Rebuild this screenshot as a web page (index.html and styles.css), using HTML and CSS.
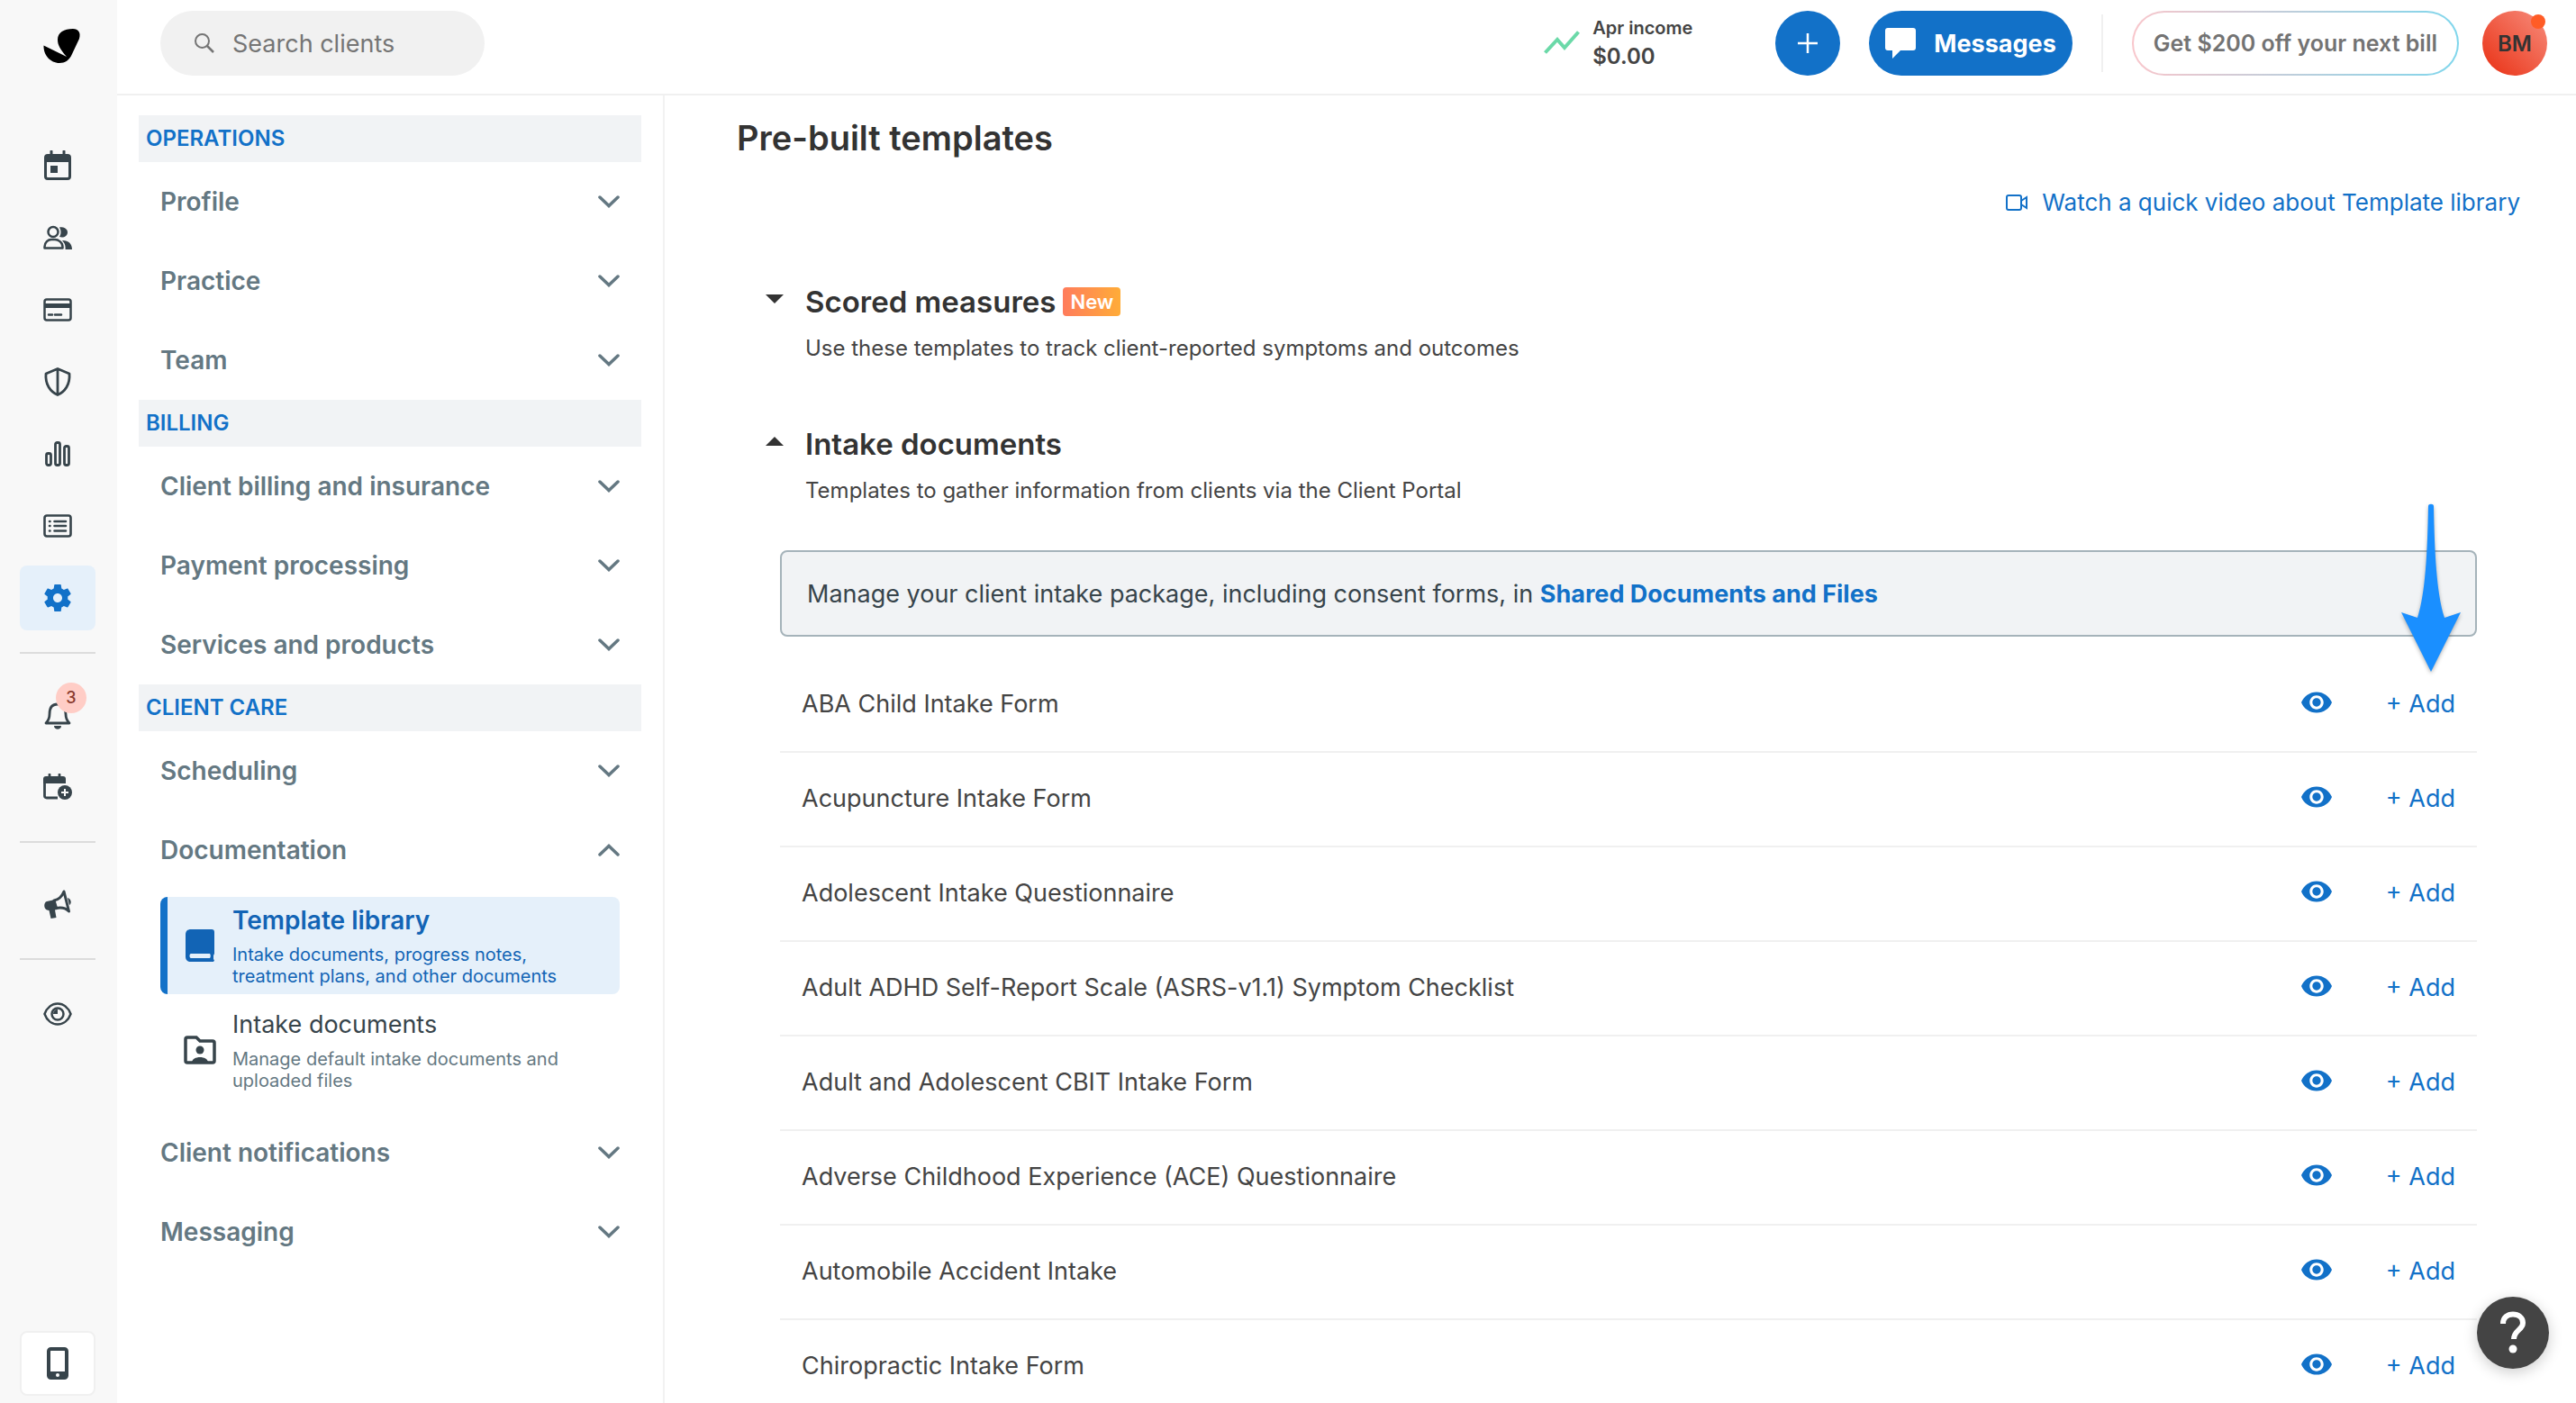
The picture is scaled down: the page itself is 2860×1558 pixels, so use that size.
FILE: index.html
```
<!DOCTYPE html>
<html lang="en">
<head>
  <meta charset="UTF-8" />
  <meta name="viewport" content="width=device-width, initial-scale=1" />
  <title>Template library</title>
  <link rel="stylesheet" href="styles.css">
</head>
<body>
  <svg width="0" height="0" class="sprite" aria-hidden="true">
    <symbol id="i-chevron" viewBox="0 0 24 14"><path d="M2 2l10 9.500L22 2" fill="none" stroke="currentColor" stroke-width="3.500" stroke-linecap="round"/></symbol>
    <symbol id="i-eye" viewBox="1 4.500 22 15"><path fill="currentColor" d="M12 4.500C7 4.500 2.730 7.610 1 12c1.730 4.390 6 7.500 11 7.500s9.270-3.110 11-7.500c-1.730-4.390-6-7.500-11-7.500zM12 17c-2.760 0-5-2.240-5-5s2.240-5 5-5 5 2.240 5 5-2.240 5-5 5zm0-8c-1.660 0-3 1.340-3 3s1.340 3 3 3 3-1.340 3-3-1.340-3-3-3z"/></symbol>
  </svg>

  <nav class="rail" aria-label="Main">
    <a href="#" class="logo" aria-label="Home">
      <svg viewBox="0 0 42 40" width="42" height="40"><path d="M26 31C19 23 16 18 16 12C16 4 23 0 33 0C39 0 42 4 40 11L32 28C29 35 24 38 18 38C8 38 0 29 .5 18.500Z"/></svg>
    </a>
    <a href="#" class="rail-item" aria-label="Calendar">
      <svg viewBox="0 0 32 34" width="32" height="34"><path d="M9 1v5M23 1v5" stroke="currentColor" stroke-width="3" stroke-linecap="round"/><rect x="2.500" y="5.500" width="27" height="26" rx="2.500" fill="none" stroke="currentColor" stroke-width="3"/><path d="M2 5h28v8H2zM8 17h8v8H8z" fill="currentColor"/></svg>
    </a>
    <a href="#" class="rail-item" aria-label="Clients">
      <svg viewBox="0 0 32 28" width="32" height="28"><circle cx="11" cy="7.500" r="5.500" fill="none" stroke="currentColor" stroke-width="2.500"/><path d="M1.500 25.500v-1.500c0-5 4-8 7.500-8h4c3.500 0 8.500 3 8.500 8v1.500z" fill="none" stroke="currentColor" stroke-width="2.500" stroke-linejoin="round"/><path d="M18 2.500c4-1 9 1 9 5.500s-5 6.500-9 5c2-3 2-7.500 0-10.500zM21 17c6-.5 11 3 11 10h-7.500c.5-4-.5-7-3.500-10z" fill="currentColor"/></svg>
    </a>
    <a href="#" class="rail-item" aria-label="Billing">
      <svg viewBox="0 0 32 26" width="32" height="26"><rect x="1.500" y="1.500" width="29" height="23" rx="2.500" fill="none" stroke="currentColor" stroke-width="2.500"/><path d="M1 6h30v5H1z" fill="currentColor"/><path d="M6 18.500h4M13 18.500h7" stroke="currentColor" stroke-width="2.500" stroke-linecap="round"/></svg>
    </a>
    <a href="#" class="rail-item" aria-label="Insurance">
      <svg viewBox="0 0 32 34" width="32" height="34" fill="none" stroke="currentColor" stroke-width="2.800" stroke-linejoin="round"><path d="M16 2.500L29 8c1 12-5 20-13 23.500C8 28 2 20 3 8zM16 3v28"/></svg>
    </a>
    <a href="#" class="rail-item" aria-label="Analytics">
      <svg viewBox="0 0 32 30" width="32" height="30" fill="none" stroke="currentColor" stroke-width="2.800"><rect x="3.500" y="14.500" width="5" height="13" rx="2"/><rect x="13.500" y="2.500" width="5" height="25" rx="2"/><rect x="23.500" y="6.500" width="5" height="21" rx="2"/></svg>
    </a>
    <a href="#" class="rail-item" aria-label="Activity">
      <svg viewBox="0 0 32 26" width="32" height="26" fill="none" stroke="currentColor" stroke-width="2.600" stroke-linecap="round"><rect x="1.500" y="1.500" width="29" height="23" rx="2.500"/><path d="M12.500 8H25M12.500 13H25M12.500 18.500H25M7 8h.500M7 13h.500M7 18.500h.500"/></svg>
    </a>
    <a href="#" class="rail-item active" aria-label="Settings" aria-current="page">
      <svg viewBox="2 1.800 20 20.400" width="32" height="32"><path fill="currentColor" d="M19.140 12.940c.04-.3.060-.61.060-.94 0-.32-.02-.64-.07-.94l2.030-1.580c.18-.14.230-.41.120-.61l-1.920-3.320c-.12-.22-.37-.29-.59-.22l-2.390.96c-.5-.38-1.030-.7-1.620-.94l-.36-2.540c-.04-.24-.24-.41-.48-.41h-3.840c-.24 0-.43.170-.47.410l-.36 2.540c-.59.240-1.130.570-1.620.940l-2.390-.96c-.22-.08-.47 0-.59.220L2.740 8.870c-.12.210-.08.470.120.610l2.030 1.580c-.05.300-.09.630-.09.940s.020.640.070.940l-2.030 1.580c-.18.140-.23.410-.12.610l1.920 3.320c.12.220.370.290.590.220l2.390-.96c.5.380 1.030.7 1.620.940l.36 2.540c.05.240.240.410.480.410h3.840c.24 0 .44-.17.470-.41l.36-2.540c.59-.24 1.130-.56 1.620-.94l2.390.96c.22.080.470 0 .59-.22l1.920-3.320c.12-.22.070-.47-.12-.61l-2.010-1.580zM12 15.200c-1.760 0-3.200-1.440-3.200-3.200s1.440-3.200 3.200-3.200 3.200 1.440 3.200 3.200-1.440 3.200-3.200 3.200z"/></svg>
    </a>
    <hr>
    <a href="#" class="rail-item" aria-label="Notifications">
      <svg viewBox="0 0 32 32" width="32" height="32"><path d="M3 25c3-3 4-6 4-10 0-6 2-11 9-11s9 5 9 11c0 4 1 7 4 10z" fill="none" stroke="currentColor" stroke-width="2.800" stroke-linejoin="round"/><path d="M12 28h8c0 5-8 5-8 0z" fill="currentColor"/></svg>
      <span class="count">3</span>
    </a>
    <a href="#" class="rail-item" aria-label="Requests">
      <svg viewBox="0 0 32 30" width="32" height="30"><path d="M7 1v5M18 1v5" stroke="currentColor" stroke-width="2.800" stroke-linecap="round"/><path d="M16 27H4c-2 0-2.500-1-2.500-2V6" fill="none" stroke="currentColor" stroke-width="2.800"/><path d="M0 6c0-2 1-3 3-3h19c2 0 3 1 3 3v5H0z" fill="currentColor"/><circle cx="24" cy="21" r="8" fill="currentColor"/><path d="M24 17v8M20 21h8" stroke="#f8f8f8" stroke-width="2"/></svg>
    </a>
    <hr>
    <a href="#" class="rail-item" aria-label="Marketing">
      <svg viewBox="0 0 32 32" width="32" height="32"><path d="M12 12c5-1 9-5 11-10l5.500 22c-4-4-9-4.500-14-3.500z" fill="none" stroke="currentColor" stroke-width="3" stroke-linejoin="round"/><path d="M13 11l2.500 11-2.500.500 1.500 8.500-6 1-2-9C0 23 0 14 4 13zM27 9c4 1 5 6 2 8z" fill="currentColor"/></svg>
    </a>
    <hr class="last">
    <a href="#" class="rail-item" aria-label="Viewed">
      <svg viewBox="0 0 32 26" width="32" height="26"><path d="M1.500 13C4 6 9.500 1.500 16 1.500S28 6 30.500 13C28 20 22.500 24.500 16 24.500S4 20 1.500 13z" fill="none" stroke="currentColor" stroke-width="2.500"/><circle cx="16" cy="13" r="6.500" fill="none" stroke="currentColor" stroke-width="2.500"/><path d="M16 8v5h-5c0-3 2-5 5-5z" fill="currentColor"/></svg>
    </a>
    <a href="#" class="rail-item phone" aria-label="Get the mobile app">
      <svg viewBox="0 0 24 36" width="24" height="36"><rect x="2" y="2" width="20" height="32" rx="2.500" fill="none" stroke="currentColor" stroke-width="4"/><path d="M2 27h20v6H2z" fill="currentColor"/><circle cx="12" cy="31" r="2" fill="#fff"/></svg>
    </a>
  </nav>

  <div class="page">
    <header class="topbar">
      <label class="search">
        <svg viewBox="0 0 22 22" width="22" height="22" fill="none" stroke="currentColor" stroke-width="2"><circle cx="8.500" cy="8.500" r="7.500"/><path d="M14 14l7 7" stroke-width="2.500"/></svg>
        <input type="search" placeholder="Search clients" aria-label="Search clients">
      </label>
      <div class="income">
        <svg viewBox="0 0 40 26" width="40" height="26" fill="none" stroke="#6bd9a8" stroke-width="4"><path d="M1.500 24.500L15 10l8 9L38.500 1.500"/></svg>
        <div>
          <div class="income-label">Apr income</div>
          <div class="income-value">$0.00</div>
        </div>
      </div>
      <button class="plus" aria-label="Create">
        <svg viewBox="0 0 22 22" width="22" height="22" stroke="#fff" stroke-width="2.500"><path d="M11 0v22M0 11h22"/></svg>
      </button>
      <button class="messages">
        <svg viewBox="0 0 34 34" width="34" height="34" fill="#fff"><path d="M3 0h28c2 0 3 1 3 3v19c0 2-1 3-3 3H17l-9 9v-9H3c-2 0-3-1-3-3V3c0-2 1-3 3-3z"/></svg>
        Messages
      </button>
      <span class="sep"></span>
      <button class="promo">Get $200 off your next bill</button>
      <button class="avatar" aria-label="Account">BM<span class="dot"></span></button>
    </header>

    <div class="body">
      <aside class="settings">
        <h2>OPERATIONS</h2>
        <button class="group">Profile <svg><use href="#i-chevron"/></svg></button>
        <button class="group">Practice <svg><use href="#i-chevron"/></svg></button>
        <button class="group">Team <svg><use href="#i-chevron"/></svg></button>
        <h2>BILLING</h2>
        <button class="group">Client billing and insurance <svg><use href="#i-chevron"/></svg></button>
        <button class="group">Payment processing <svg><use href="#i-chevron"/></svg></button>
        <button class="group">Services and products <svg><use href="#i-chevron"/></svg></button>
        <h2>CLIENT CARE</h2>
        <button class="group">Scheduling <svg><use href="#i-chevron"/></svg></button>
        <button class="group open" aria-expanded="true">Documentation <svg><use href="#i-chevron"/></svg></button>
        <div class="sub">
          <a href="#" class="sub-item active">
            <svg viewBox="0 0 36 36" width="36" height="36"><path d="M8 0h23c2 0 3 1 3 3v24l-1 2v4l1 1.500-1 1.500H8c-4 0-6-2-6-6V6c0-4 2-6 6-6zM8 27c-2 0-2 5 0 5h21c1-1 1-4 0-5z" fill="currentColor" fill-rule="evenodd"/></svg>
            <span>
              <strong>Template library</strong>
              <small>Intake documents, progress notes, treatment plans, and other documents</small>
            </span>
          </a>
          <a href="#" class="sub-item">
            <svg viewBox="0 0 36 32" width="36" height="32"><path d="M2 4c0-1.500.5-2 2-2h10l4 4h14c1.500 0 2 .5 2 2v20c0 1.500-.5 2-2 2H4c-1.500 0-2-.5-2-2z" fill="none" stroke="currentColor" stroke-width="3.500"/><circle cx="18" cy="16" r="4.500" fill="currentColor"/><path d="M9 30c0-8 18-8 18 0z" fill="currentColor"/></svg>
            <span>
              <strong>Intake documents</strong>
              <small>Manage default intake documents and uploaded files</small>
            </span>
          </a>
        </div>
        <button class="group">Client notifications <svg><use href="#i-chevron"/></svg></button>
        <button class="group">Messaging <svg><use href="#i-chevron"/></svg></button>
      </aside>

      <main>
        <h1>Pre-built templates</h1>
        <a href="#" class="video">
          <svg viewBox="0 0 24 18" width="24" height="18" fill="none" stroke="currentColor" stroke-width="2"><rect x="1" y="1" width="16" height="16" rx="2"/><path d="M17 7l6-4v12l-6-4"/></svg>
          Watch a quick video about Template library
        </a>

        <section class="category">
          <svg class="caret" viewBox="0 0 20 10"><path d="M0 0h20L10 10z"/></svg>
          <div>
            <h3>Scored measures <span class="new">New</span></h3>
            <p>Use these templates to track client-reported symptoms and outcomes</p>
          </div>
        </section>
        <section class="category open">
          <svg class="caret" viewBox="0 0 20 10"><path d="M0 0h20L10 10z"/></svg>
          <div>
            <h3>Intake documents</h3>
            <p>Templates to gather information from clients via the Client Portal</p>
          </div>
        </section>

        <div class="notice">
          <span>Manage your client intake package, including consent forms, in <a href="#">Shared Documents and Files</a></span>
          <svg class="arrow" viewBox="0 0 68 188" width="68" height="188"><path d="M31 3c0-3 6-3 6 0 1 50 3 96 12 124l18-6-33 66L1 121l18 6c9-28 11-74 12-124z" fill="#1a8fff"/></svg>
        </div>

        <ul class="templates">
          <li>ABA Child Intake Form <button class="view" aria-label="Preview"><svg><use href="#i-eye"/></svg></button><button class="add">+ Add</button></li>
          <li>Acupuncture Intake Form <button class="view" aria-label="Preview"><svg><use href="#i-eye"/></svg></button><button class="add">+ Add</button></li>
          <li>Adolescent Intake Questionnaire <button class="view" aria-label="Preview"><svg><use href="#i-eye"/></svg></button><button class="add">+ Add</button></li>
          <li>Adult ADHD Self-Report Scale (ASRS-v1.1) Symptom Checklist <button class="view" aria-label="Preview"><svg><use href="#i-eye"/></svg></button><button class="add">+ Add</button></li>
          <li>Adult and Adolescent CBIT Intake Form <button class="view" aria-label="Preview"><svg><use href="#i-eye"/></svg></button><button class="add">+ Add</button></li>
          <li>Adverse Childhood Experience (ACE) Questionnaire <button class="view" aria-label="Preview"><svg><use href="#i-eye"/></svg></button><button class="add">+ Add</button></li>
          <li>Automobile Accident Intake <button class="view" aria-label="Preview"><svg><use href="#i-eye"/></svg></button><button class="add">+ Add</button></li>
          <li>Chiropractic Intake Form <button class="view" aria-label="Preview"><svg><use href="#i-eye"/></svg></button><button class="add">+ Add</button></li>
        </ul>
      </main>
    </div>
  </div>

  <button class="help" aria-label="Help">
    <svg viewBox="0 0 30 48" width="30" height="48"><path d="M4 14C4 7 9 3.500 15 3.500S26 7 26 13c0 8-10 8-10 18" fill="none" stroke="#fff" stroke-width="6"/><circle cx="15" cy="42" r="4.500" fill="#fff"/></svg>
  </button>
</body>
</html>
```

FILE: styles.css
```
* {
  box-sizing: border-box;
}
body {
  display: flex;
  height: 100vh;
  margin: 0;
  overflow: hidden;
  background: #fff;
  color: #444;
  font-family: Inter, "Liberation Sans", sans-serif;
  font-size: 27px;
}
a {
  color: #1271c8;
  text-decoration: none;
}
button {
  padding: 0;
  border: none;
  background: none;
  color: inherit;
  font: inherit;
  cursor: pointer;
}
h1, h2, h3, p, ul {
  margin: 0;
  padding: 0;
}
svg {
  flex-shrink: 0;
}
.sprite {
  position: absolute;
}

/* icon rail */
.rail {
  display: flex;
  flex-direction: column;
  flex-shrink: 0;
  width: 130px;
  padding: 32px 24px 8px 22px;
  background: #f8f8f8;
}
.logo {
  height: 108px;
  padding-left: 26px;
}
.rail-item {
  position: relative;
  display: flex;
  align-items: center;
  justify-content: center;
  flex-shrink: 0;
  height: 72px;
  margin-top: 8px;
  border-radius: 8px;
  color: #37444b;
}
.rail-item.active {
  background: #e5f0fa;
  color: #1271c8;
}
.rail hr {
  width: 100%;
  height: 2px;
  margin: 24px 0;
  border: none;
  background: #dcdcdc;
}
.rail hr.last {
  margin-bottom: 16px;
}
.count {
  position: absolute;
  top: 0;
  left: 40px;
  width: 34px;
  height: 34px;
  border-radius: 50%;
  background: #ffcdc6;
  color: #8a3b2e;
  font-size: 18px;
  font-weight: 500;
  line-height: 34px;
  text-align: center;
}
.rail-item.phone {
  margin-top: auto;
  border: 2px solid #f0f0f0;
  background: #fff;
}

/* top bar */
.page {
  display: flex;
  flex: 1;
  flex-direction: column;
  min-width: 0;
}
.topbar {
  display: flex;
  align-items: center;
  flex-shrink: 0;
  height: 106px;
  padding: 0 32px 8px 48px;
  border-bottom: 2px solid #f0f0f0;
}
.search {
  display: flex;
  align-items: center;
  gap: 20px;
  width: 360px;
  height: 72px;
  margin-right: auto;
  padding: 0 38px;
  border-radius: 36px;
  background: #f1f1f1;
  color: #757575;
}
.search input {
  width: 100%;
  padding: 0;
  border: none;
  outline: none;
  background: none;
  font: inherit;
}
.search input::placeholder {
  color: #757575;
}
.income {
  display: flex;
  align-items: center;
  gap: 14px;
  margin-right: 92px;
  padding-bottom: 2px;
  font-weight: 600;
}
.income-label {
  font-size: 20px;
  line-height: 32px;
}
.income-value {
  font-size: 24px;
  line-height: 32px;
}
.plus {
  display: flex;
  align-items: center;
  justify-content: center;
  width: 72px;
  height: 72px;
  margin-right: 32px;
  border-radius: 50%;
  background: #1271c8;
}
.messages {
  display: flex;
  align-items: center;
  gap: 20px;
  height: 72px;
  padding: 0 18px;
  border-radius: 36px;
  background: #1271c8;
  color: #fff;
  font-weight: 700;
}
.sep {
  width: 2px;
  height: 64px;
  margin: 0 32px;
  background: #f0f0f0;
}
.promo {
  height: 72px;
  margin-right: 26px;
  padding: 0 22px;
  border: 2px solid transparent;
  border-radius: 36px;
  background: linear-gradient(#fff, #fff) padding-box, linear-gradient(90deg, #f9c6cb, #7fd6ec) border-box;
  color: #737373;
  font-size: 25px;
  font-weight: 600;
}
.avatar {
  position: relative;
  width: 72px;
  height: 72px;
  border-radius: 50%;
  background: linear-gradient(45deg, #e92f12, #f78d7d);
  color: #333;
  font-size: 24px;
  font-weight: 600;
}
.dot {
  position: absolute;
  top: 4px;
  right: 2px;
  width: 16px;
  height: 16px;
  border-radius: 50%;
  background: #ff5c26;
}

/* settings menu */
.body {
  display: flex;
  flex: 1;
  min-height: 0;
}
.settings {
  flex-shrink: 0;
  width: 608px;
  padding: 22px 24px 0;
  border-right: 2px solid #f2f2f2;
}
.settings h2 {
  padding-left: 8px;
  background: #f1f3f5;
  color: #1271c8;
  font-size: 24px;
  font-weight: 600;
  line-height: 52px;
}
.group {
  display: flex;
  align-items: center;
  justify-content: space-between;
  width: 100%;
  height: 88px;
  padding: 0 24px;
  color: #647882;
  font-size: 28px;
  font-weight: 600;
}
.group svg {
  width: 24px;
  height: 14px;
}
.group.open svg {
  transform: rotate(180deg);
}
.sub {
  display: flex;
  flex-direction: column;
  gap: 8px;
  padding: 8px 24px 16px;
}
.sub-item {
  display: flex;
  align-items: center;
  gap: 18px;
  height: 108px;
  padding: 0 48px 0 18px;
  border-left: 8px solid transparent;
  border-radius: 8px;
  color: #37444b;
}
.sub-item.active {
  border-color: #1271c8;
  background: #e5f0fa;
  color: #1264b5;
}
.sub-item strong {
  display: block;
  margin-bottom: 8px;
  font-weight: 400;
  line-height: 36px;
}
.sub-item.active strong {
  font-size: 28px;
  font-weight: 600;
}
.sub-item small {
  display: block;
  color: #647882;
  font-size: 20px;
  line-height: 24px;
}
.sub-item.active small {
  color: inherit;
}

/* templates */
main {
  flex: 1;
  min-width: 0;
  padding: 22px 62px 0 80px;
}
h1 {
  color: #333;
  font-size: 38px;
  font-weight: 600;
  line-height: 50px;
}
.video {
  display: flex;
  align-items: center;
  justify-content: flex-end;
  gap: 16px;
  margin: 27px 0 68px;
  font-size: 26px;
  line-height: 40px;
}
.category {
  display: flex;
  gap: 24px;
  height: 158px;
  padding-left: 32px;
}
.caret {
  width: 20px;
  height: 10px;
  margin-top: 14px;
  fill: #333;
}
.category.open .caret {
  transform: rotate(180deg);
}
.category h3 {
  display: flex;
  align-items: center;
  gap: 8px;
  color: #333;
  font-size: 33px;
  font-weight: 600;
  line-height: 44px;
}
.category p {
  margin-top: 14px;
  font-size: 24px;
  line-height: 32px;
}
.new {
  padding: 0 8px;
  border-radius: 4px;
  background: linear-gradient(90deg, #ff7c5c, #ffac38);
  color: #fff;
  font-size: 22px;
  line-height: 32px;
}
.notice {
  position: relative;
  display: flex;
  align-items: center;
  height: 96px;
  margin: -18px 48px 24px;
  padding: 0 28px;
  border: 2px solid #a5b3ba;
  border-radius: 8px;
  background: #f1f3f5;
  color: #37444b;
}
.notice a {
  font-weight: 700;
}
.arrow {
  position: absolute;
  top: -54px;
  right: 15px;
  filter: drop-shadow(0 2px 2px rgba(0, 0, 0, 0.3));
}
.templates {
  margin: 0 48px;
  list-style: none;
}
.templates li {
  display: flex;
  align-items: center;
  height: 105px;
  padding: 0 24px 2px;
  border-bottom: 2px solid #f0f0f0;
}
.view {
  display: flex;
  margin-left: auto;
  padding-bottom: 4px;
  color: #1271c8;
}
.view svg {
  width: 34px;
  height: 24px;
}
.add {
  margin-left: 60px;
  color: #1271c8;
}

.help {
  position: fixed;
  right: 30px;
  bottom: 38px;
  display: flex;
  align-items: center;
  justify-content: center;
  width: 80px;
  height: 80px;
  border-radius: 50%;
  background: #444;
  box-shadow: 0 4px 16px rgba(0, 0, 0, 0.2);
}
```
